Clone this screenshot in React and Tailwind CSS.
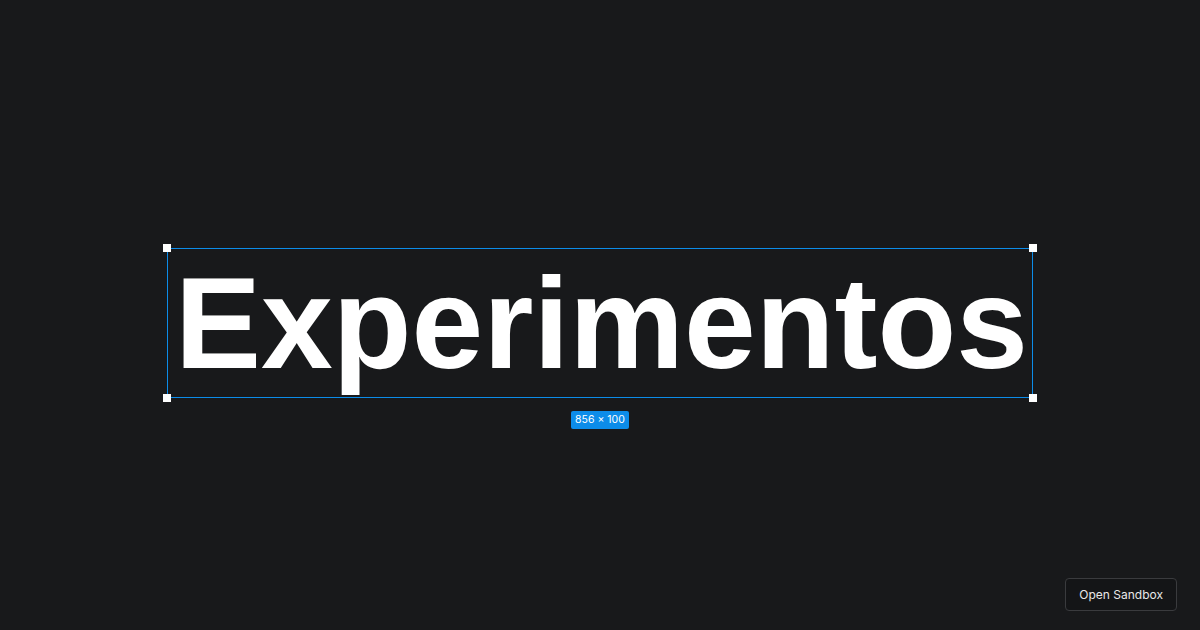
function Handle({ pos }) {
  return <div className={`absolute w-[8px] h-[8px] bg-white ${pos}`} />;
}

export default function App() {
  return (
    <div className="relative w-[1200px] h-[630px] bg-[#18191b] overflow-hidden flex flex-col items-center justify-center" style={{ fontFamily: "Inter, 'Liberation Sans', sans-serif" }}>
      <div className="flex flex-col items-center gap-[13px] mt-[47px]">
        <div className="relative">
          <div className="border border-[#0c8ce9] pl-[7px] w-[866px] h-[150px] overflow-visible">
            <div className="text-white font-bold text-[129px] leading-[148px] whitespace-nowrap" style={{ fontFamily: "'Liberation Sans', Arial, sans-serif" }}>
              Experimentos
            </div>
          </div>
          <Handle pos="-left-[4px] -top-[4px]" />
          <Handle pos="-right-[4px] -top-[4px]" />
          <Handle pos="-left-[4px] -bottom-[4px]" />
          <Handle pos="-right-[4px] -bottom-[4px]" />
        </div>
        <div className="h-[18px] px-[4px] rounded-[2px] bg-[#0c8ce9] text-white text-[10.5px] leading-[18px] whitespace-nowrap">
          856 × 100
        </div>
      </div>
      <button className="absolute right-[23px] bottom-[19px] h-[33px] px-[13px] rounded-[4px] border border-[#3a3b3e] bg-[#141517] text-[#e8e8e8] text-[12px] leading-none">
        Open Sandbox
      </button>
    </div>
  );
}
